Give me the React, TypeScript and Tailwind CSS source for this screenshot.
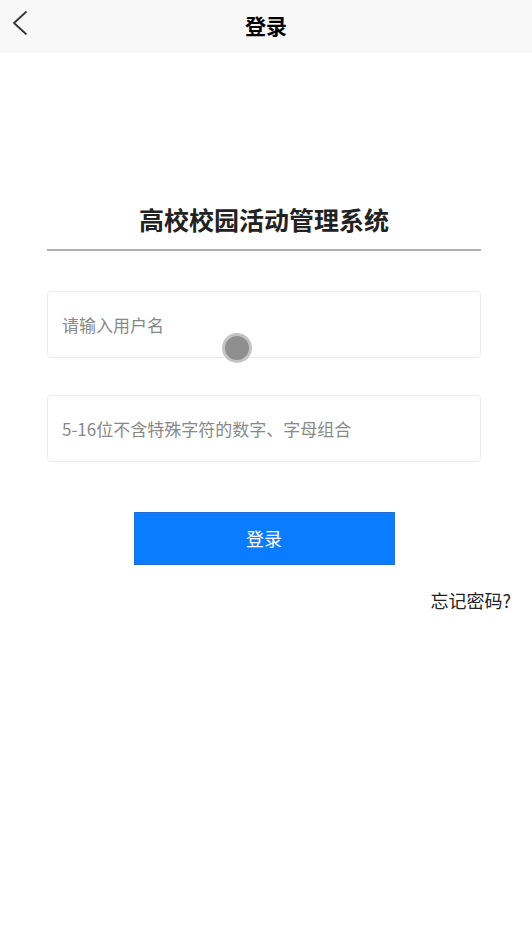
export default function App() {
  const font = { fontFamily: '"Noto Sans CJK SC", "Liberation Sans", sans-serif' }
  return (
    <div className="w-[532px] h-[949px] bg-white relative overflow-hidden" style={font}>
      {/* header */}
      <div className="h-[53px] bg-[#f8f8f8] flex items-center relative">
        <svg className="absolute left-[10px] top-[10px]" width="20" height="26" viewBox="0 0 20 26" fill="none">
          <polyline points="16,2 4,13 16,24" stroke="#333" strokeWidth="1.8" strokeLinecap="round" strokeLinejoin="round" />
        </svg>
        <div className="w-full text-center text-[21px] font-bold text-black leading-none pb-[3px]">登录</div>
      </div>

      <div className="pl-[47px] pr-[51px] pt-[154px]">
        <div className="text-center text-[25px] font-bold text-[#222] leading-none pb-[17px] border-b-2 border-[#b0b0b0]">
          高校校园活动管理系统
        </div>

        <div className="mt-[40px] h-[67px] border border-[#ececec] rounded-[4px] flex items-center px-[14px]">
          <span className="text-[17px] text-[#888]">请输入用户名</span>
        </div>

        <div className="mt-[37px] h-[67px] border border-[#ececec] rounded-[4px] flex items-center px-[14px]">
          <span className="text-[17px] text-[#888]">5-16位不含特殊字符的数字、字母组合</span>
        </div>

        <div className="mt-[50px] flex justify-center">
          <button className="w-[261px] h-[53px] bg-[#0a7cff] border border-[#1f6fd6] text-white text-[18px]">
            登录
          </button>
        </div>
      </div>

      <div className="mt-[22px] pr-[21px] text-right text-[18px] text-[#222]">忘记密码?</div>

      {/* touch indicator */}
      <div className="absolute left-[222px] top-[333px] w-[30px] h-[30px] rounded-full bg-[#8f8f8f] border-[3px] border-[#c4c4c4]" />
    </div>
  )
}
